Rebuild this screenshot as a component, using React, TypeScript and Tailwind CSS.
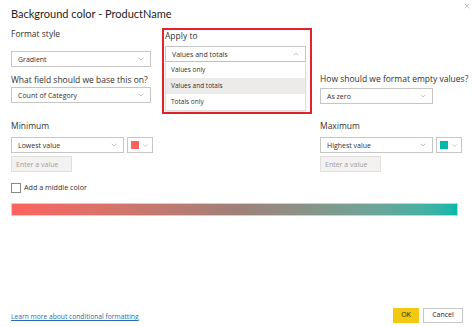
import { ChevronDown, ChevronUp, X } from "lucide-react"

function Select(props: { value: string; width: string; open?: boolean }) {
  return (
    <div
      className={`flex h-[16px] items-center justify-between border border-[#c8c6c4] bg-white pl-[6px] pr-[5px] ${props.width}`}
    >
      <span className="text-[7px] leading-none text-[#323130]">{props.value}</span>
      {props.open ? (
        <ChevronUp className="h-[8px] w-[8px] text-[#8a8886]" strokeWidth={1.5} />
      ) : (
        <ChevronDown className="h-[8px] w-[8px] text-[#8a8886]" strokeWidth={1.5} />
      )}
    </div>
  )
}

function ColorButton(props: { color: string }) {
  return (
    <div className="ml-[3px] flex h-[16px] w-[26px] items-center justify-between border border-[#c8c6c4] bg-white pl-[3px] pr-[3px]">
      <span className={`h-[8px] w-[8px] ${props.color}`} />
      <ChevronDown className="h-[7px] w-[7px] text-[#8a8886]" strokeWidth={1.5} />
    </div>
  )
}

function ValueInput() {
  return (
    <div className="mt-[3px] flex h-[16px] w-[61px] items-center border border-[#e1dfdd] bg-[#f3f2f1] pl-[4px]">
      <span className="text-[7px] leading-none text-[#a19f9d]">Enter a value</span>
    </div>
  )
}

function Label(props: { children: string }) {
  return <p className="whitespace-nowrap text-[8.5px] leading-[12px] text-[#323130]">{props.children}</p>
}

export default function App() {
  return (
    <div className="relative flex h-[327px] w-[474px] flex-col overflow-hidden bg-white px-[11px] pt-[6px] font-['Open_Sans',sans-serif] text-[#252423]">
      <X className="absolute right-[3px] top-[2px] h-[8px] w-[8px] text-[#8a8886]" strokeWidth={1.5} />

      <h1 className="font-['Lato',sans-serif] text-[11px] leading-[16px] text-[#252423]">
        Background color - ProductName
      </h1>

      <div className="mt-[6px] flex items-start">
        <div className="flex w-[140px] flex-col">
          <Label>Format style</Label>
          <div className="mt-[11px]">
            <Select value="Gradient" width="w-[140px]" />
          </div>
          <div className="mt-[7px]">
            <Label>What field should we base this on?</Label>
          </div>
          <div className="mt-[1px]">
            <Select value="Count of Category" width="w-[140px]" />
          </div>
        </div>

        <div className="ml-[11px] w-[150px] border-2 border-[#e3232b] pb-[1px] pl-[1px]">
          <Label>Apply to</Label>
          <div className="mt-[4px]">
            <Select value="Values and totals" width="w-[141px]" open />
          </div>
          <ul className="w-[141px] border-x border-b border-[#e1dfdd] bg-white text-[6.5px] text-[#323130] shadow-sm">
            <li className="flex h-[16px] items-center pl-[5px]">Values only</li>
            <li className="flex h-[16px] items-center bg-[#edebe9] pl-[5px]">Values and totals</li>
            <li className="flex h-[16px] items-center pl-[5px]">Totals only</li>
          </ul>
        </div>

        <div className="ml-[8px] mt-[45px] flex w-[142px] flex-col">
          <Label>How should we format empty values?</Label>
          <div className="mt-[3px]">
            <Select value="As zero" width="w-[113px]" />
          </div>
        </div>
      </div>

      <div className="mt-[6px] flex">
        <div className="w-[309px]">
          <Label>Minimum</Label>
          <div className="mt-[5px] flex">
            <Select value="Lowest value" width="w-[113px]" />
            <ColorButton color="bg-[#fd625e]" />
          </div>
          <ValueInput />
        </div>
        <div>
          <Label>Maximum</Label>
          <div className="mt-[5px] flex">
            <Select value="Highest value" width="w-[113px]" />
            <ColorButton color="bg-[#01b8aa]" />
          </div>
          <ValueInput />
        </div>
      </div>

      <div className="mt-[11px] flex items-center">
        <span className="h-[10px] w-[10px] border border-[#8a8886] bg-white" />
        <span className="ml-[3px] text-[7.2px] leading-none text-[#323130]">Add a middle color</span>
      </div>

      <div className="mt-[10px] h-[13px] w-[447px] border border-[#d0d0d0] bg-gradient-to-r from-[#fd625e] via-[#a08078] to-[#01b8aa]" />

      <div className="mt-auto mb-[4px] flex items-end justify-between">
        <a className="mb-[2px] text-[6.7px] leading-none text-[#2b6cb0] underline">
          Learn more about conditional formatting
        </a>
        <div className="flex gap-[4px]">
          <button className="h-[15px] w-[26px] bg-[#f2c811] text-[7px] text-[#252423]">OK</button>
          <button className="h-[15px] w-[40px] border border-[#c8c6c4] bg-white text-[7px] text-[#252423]">
            Cancel
          </button>
        </div>
      </div>
    </div>
  )
}
